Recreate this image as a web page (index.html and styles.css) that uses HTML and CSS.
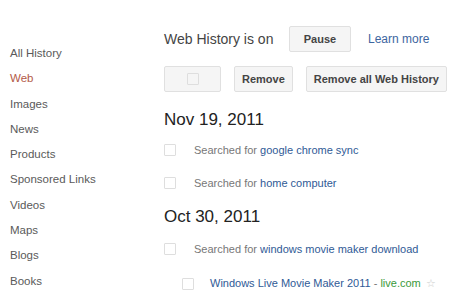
FILE: index.html
```html
<!DOCTYPE html>
<html lang="en">
<head>
  <meta charset="UTF-8" />
  <title>Web History</title>
  <link rel="stylesheet" href="styles.css">
</head>
<body>
  <div class="page">
    <ul class="nav">
      <li>All History</li>
      <li class="active">Web</li>
      <li>Images</li>
      <li>News</li>
      <li>Products</li>
      <li>Sponsored Links</li>
      <li>Videos</li>
      <li>Maps</li>
      <li>Blogs</li>
      <li>Books</li>
    </ul>

    <div class="main">
      <div class="status">
        <span class="status-text">Web History is on</span>
        <button class="btn btn-pause">Pause</button>
        <a class="learn" href="#">Learn more</a>
      </div>

      <div class="toolbar">
        <button class="btn btn-check"><span class="box"></span></button>
        <button class="btn">Remove</button>
        <button class="btn">Remove all Web History</button>
      </div>

      <h2 class="day">Nov 19, 2011</h2>
      <div class="row"><span class="box"></span><span class="label">Searched for <a href="#">google chrome sync</a></span></div>
      <div class="row"><span class="box"></span><span class="label">Searched for <a href="#">home computer</a></span></div>

      <h2 class="day day-second">Oct 30, 2011</h2>
      <div class="row"><span class="box"></span><span class="label">Searched for <a href="#">windows movie maker download</a></span></div>
      <div class="row row-sub"><span class="box"></span><span class="label"><a href="#">Windows Live Movie Maker 2011</a> - <span class="site">live.com</span> <span class="star">&#9734;</span></span></div>
    </div>
  </div>
</body>
</html>
```

FILE: styles.css
```css
body {
  margin: 0;
  background: #fff;
  font-family: "Liberation Sans", Arial, sans-serif;
  color: #555;
}
.page {
  display: flex;
}
.nav {
  list-style: none;
  margin: 0;
  padding: 41px 0 0 10px;
  width: 154px;
  font-size: 11.5px;
  line-height: 25.3px;
  color: #5a5a5a;
}
.nav .active {
  color: #b35a48;
}
.main {
  padding-top: 26px;
  flex: 1;
}
.status {
  display: flex;
  align-items: center;
  height: 26px;
}
.status-text {
  font-size: 14px;
  color: #444;
  width: 125px;
}
.btn {
  font-family: "Liberation Sans", Arial, sans-serif;
  font-size: 11px;
  font-weight: bold;
  color: #444;
  background: #f5f5f5;
  border: 1px solid #e0e0e0;
  border-radius: 2px;
  height: 26px;
  padding: 0 7px;
  margin: 0;
}
.btn-pause {
  width: 62px;
}
.learn {
  margin-left: 17px;
  font-size: 12px;
  color: #3d65a0;
  text-decoration: none;
}
.toolbar {
  display: flex;
  gap: 13px;
  margin-top: 14px;
}
.btn-check {
  width: 57px;
  display: flex;
  align-items: center;
  justify-content: center;
}
.box {
  display: inline-block;
  width: 10px;
  height: 10px;
  border: 1px solid #dedede;
  border-radius: 1px;
  background: #fff;
  flex: none;
}
.btn-check .box {
  background: #f5f5f5;
}
.day {
  font-size: 17px;
  font-weight: normal;
  line-height: 20px;
  color: #222;
  margin: 18px 0 3px;
}
.day-second {
  margin-top: 8px;
  margin-bottom: 5px;
}
.row {
  display: flex;
  align-items: center;
  height: 33px;
  font-size: 11px;
}
.row .label {
  margin-left: 18px;
  color: #777;
}
.row a {
  color: #2f5a96;
  text-decoration: none;
}
.row-sub {
  padding-left: 18px;
  height: 37px;
}
.row-sub .label {
  margin-left: 16px;
}
.site {
  color: #3a9a3a;
}
.star {
  color: #ccc;
  margin-left: 2px;
}
```
